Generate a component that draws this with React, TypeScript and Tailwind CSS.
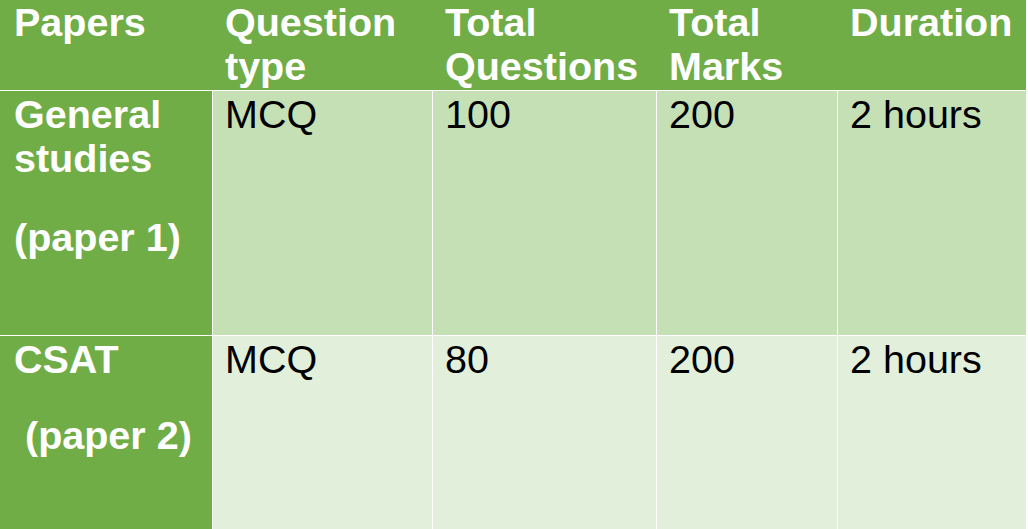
const rows = [
  {
    paper: "General",
    paper2: "studies",
    sub: "(paper 1)",
    subGap: "mt-[35px]",
    type: "MCQ",
    questions: "100",
    marks: "200",
    duration: "2 hours",
    bg: "bg-[#C5E0B4]",
    height: "h-[244px]",
  },
  {
    paper: "CSAT",
    paper2: "",
    sub: "\u00a0(paper 2)",
    subGap: "mt-[32px]",
    type: "MCQ",
    questions: "80",
    marks: "200",
    duration: "2 hours",
    bg: "bg-[#E2EFDA]",
    height: "h-[194px]",
  },
];

const cols = "grid grid-cols-[212px_219px_223px_180px_188px] gap-x-px";

const App = () => {
  return (
    <div className="w-screen h-screen bg-white overflow-hidden">
      <div className="w-[1026px] font-['Liberation_Sans',Arial,sans-serif] text-[39.5px] leading-[44px]">
        {/* header */}
        <div className={`${cols} h-[90px] bg-[#70AD47] text-white font-bold`}>
          <div className="pl-[14px]">Papers</div>
          <div className="pl-3">
            Question
            <br />
            type
          </div>
          <div className="pl-3">
            Total
            <br />
            Questions
          </div>
          <div className="pl-3">
            Total
            <br />
            Marks
          </div>
          <div className="pl-3">Duration</div>
        </div>

        {/* body rows */}
        {rows.map((r) => (
          <div key={r.paper} className={`${cols} mt-px ${r.height}`}>
            <div className="bg-[#70AD47] text-white font-bold pl-[14px] pt-px">
              <div>
                {r.paper}
                {r.paper2 && (
                  <>
                    <br />
                    {r.paper2}
                  </>
                )}
              </div>
              <div className={r.subGap}>{r.sub}</div>
            </div>
            <div className={`${r.bg} text-black pl-3 pt-px`}>{r.type}</div>
            <div className={`${r.bg} text-black pl-3 pt-px`}>{r.questions}</div>
            <div className={`${r.bg} text-black pl-3 pt-px`}>{r.marks}</div>
            <div className={`${r.bg} text-black pl-3 pt-px`}>{r.duration}</div>
          </div>
        ))}
      </div>
    </div>
  );
};

export default App;
